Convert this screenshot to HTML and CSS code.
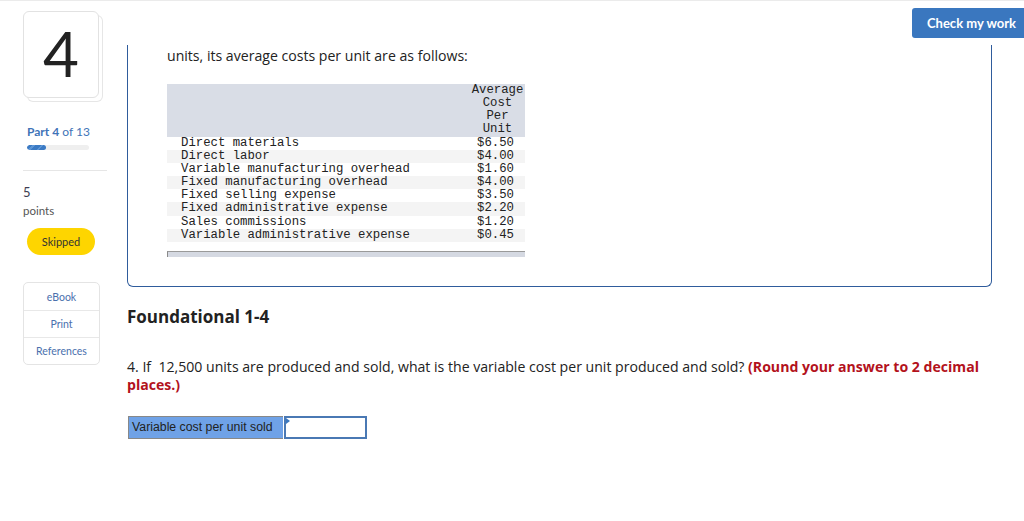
FILE: index.html
```html
<!DOCTYPE html>
<html>
<head>
<meta charset="utf-8">
<link rel="stylesheet" href="styles.css">
</head>
<body>
<div class="topline"></div>
<div class="page">
  <aside class="sidebar">
    <div class="qnum-wrap"><div class="qnum">4</div></div>
    <div class="part"><b>Part 4</b> of 13</div>
    <div class="progress"><div class="progress-fill" style="width: 30%"></div></div>
    <div class="rule"></div>
    <div class="pts-num">5</div>
    <div class="pts-label">points</div>
    <div class="skipped">Skipped</div>
    <div class="links">
      <div class="link">eBook</div>
      <div class="link">Print</div>
      <div class="link">References</div>
    </div>
  </aside>
  <main class="main">
    <header class="header">
      <button class="check">Check my work</button>
    </header>
    <section class="card">
      <p class="intro">units, its average costs per unit are as follows:</p>
      <table class="costs">
        <thead>
          <tr><th class="blank"></th><th class="hdr">Average<br>Cost<br>Per<br>Unit</th></tr>
        </thead>
        <tbody>
          <tr><td class="lbl">Direct materials</td><td class="val">$6.50</td></tr>
          <tr class="alt"><td class="lbl">Direct labor</td><td class="val">$4.00</td></tr>
          <tr><td class="lbl">Variable manufacturing overhead</td><td class="val">$1.60</td></tr>
          <tr class="alt"><td class="lbl">Fixed manufacturing overhead</td><td class="val">$4.00</td></tr>
          <tr><td class="lbl">Fixed selling expense</td><td class="val">$3.50</td></tr>
          <tr class="alt"><td class="lbl">Fixed administrative expense</td><td class="val">$2.20</td></tr>
          <tr><td class="lbl">Sales commissions</td><td class="val">$1.20</td></tr>
          <tr class="alt"><td class="lbl">Variable administrative expense</td><td class="val">$0.45</td></tr>
        </tbody>
      </table>
      <div class="table-foot"></div>
    </section>
    <h2 class="title">Foundational 1-4</h2>
    <div class="question">
      <div class="q-line">4. If&nbsp; 12,500 units are produced and sold, what is the variable cost per unit produced and sold? <strong class="note">(Round your answer to 2 decimal</strong></div>
      <div class="q-line"><strong class="note">places.)</strong></div>
    </div>
    <div class="answer">
      <div class="answer-label">Variable cost per unit sold</div>
      <div class="answer-input"><span class="flag"></span></div>
    </div>
  </main>
</div>
</body>
</html>
```

FILE: styles.css
```css
* { box-sizing: border-box; }
html, body { margin: 0; padding: 0; background: #fff; }
body {
  width: 1024px;
  height: 521px;
  overflow: hidden;
  font-family: "Open Sans", "Liberation Sans", sans-serif;
  color: #222;
}
.topline { height: 1px; background: #ebebeb; }
.page { display: flex; }

.sidebar {
  width: 127px;
  flex: none;
  padding-left: 23px;
  padding-top: 10px;
  font-family: Lato, "Liberation Sans", sans-serif;
}
.qnum-wrap { width: 81px; height: 92px; }
.qnum {
  width: 76px;
  height: 87px;
  border: 1px solid #e2e2e2;
  border-radius: 6px;
  background: #fff;
  box-shadow: 4px 4px 0 -1px #fff, 4px 4px 0 0 #e6e6e6;
  display: flex;
  align-items: center;
  justify-content: center;
  font-size: 62px;
  font-weight: 400;
  color: #222;
  line-height: 1;
  padding-bottom: 4px;
}
.part {
  margin: 22px 0 0 4px;
  font-size: 12px;
  line-height: 14px;
  color: #3f74b8;
}
.part b { font-weight: 700; }
.progress {
  margin: 6px 0 0 4px;
  width: 62px;
  height: 5px;
  border-radius: 3px;
  background: #efefef;
  overflow: hidden;
}
.progress-fill {
  height: 100%;
  border-radius: 3px;
  background: repeating-linear-gradient(135deg, #3b7ac4 0 4px, #5b95d6 4px 6px);
}
.rule { margin-top: 20px; width: 84px; height: 1px; background: #e6e6e6; }
.pts-num { margin-top: 14px; font-size: 13px; line-height: 15px; color: #3d3d52; }
.pts-label { margin-top: 4px; font-size: 11.5px; line-height: 14px; color: #555; }
.skipped {
  margin: 10px 0 0 4px;
  width: 68px;
  height: 27px;
  border-radius: 14px;
  background: #fed500;
  display: flex;
  align-items: center;
  justify-content: center;
  font-size: 11px;
  color: #333;
}
.links {
  margin-top: 27px;
  width: 77px;
  border: 1px solid #e4e4e4;
  border-radius: 5px;
}
.link {
  height: 27px;
  display: flex;
  align-items: center;
  justify-content: center;
  font-size: 10.5px;
  color: #4a70ad;
}
.link + .link { border-top: 1px solid #e8e8e8; }

.main { width: 897px; flex: none; }
.header { height: 44px; display: flex; justify-content: flex-end; align-items: flex-start; padding-top: 7px; }
.check {
  height: 30px;
  width: 114px;
  margin-right: -2px;
  border: none;
  border-radius: 3px;
  background: #3a77bf;
  color: #fff;
  font-family: Lato, "Liberation Sans", sans-serif;
  font-weight: 700;
  font-size: 13px;
  text-align: left;
  padding: 0 0 0 15px;
}

.card {
  width: 865px;
  border: 1px solid #2f5c9c;
  border-top: none;
  border-radius: 0 0 6px 6px;
  padding: 2px 0 29px 39px;
}
.intro { margin: 0; font-size: 14.1px; line-height: 18px; color: #222; }
.costs {
  margin-top: 19px;
  border-collapse: collapse;
  width: 358px;
  font-family: "Liberation Mono", "DejaVu Sans Mono", monospace;
  font-size: 12.3px;
  color: #222;
}
.costs thead tr { background: #d9dde6; }
.costs th { font-weight: 400; padding: 0; line-height: 13px; vertical-align: top; }
.costs .hdr { width: 55px; text-align: center; padding-bottom: 1px; }
.costs td { padding: 0; line-height: 13.1px; height: 13.1px; }
.costs .lbl { padding-left: 14px; }
.costs .val { text-align: right; padding-right: 11px; }
.costs .alt { background: #f4f4f4; }
.table-foot {
  margin-top: 9px;
  width: 358px;
  height: 6px;
  background: #d5d9e2;
  border-top: 1px solid #9a9a9a;
  border-left: 1px solid #8a8a8a;
}

.title {
  margin: 19px 0 0 0;
  font-size: 17px;
  line-height: 22px;
  font-weight: 700;
  color: #222;
}
.question {
  margin: 30px 0 0 0;
  width: 875px;
  font-size: 14.1px;
  line-height: 18px;
  color: #222;
}
.q-line { white-space: nowrap; }
.note { color: #b3121c; font-weight: 700; }
.answer {
  margin: 22px 0 0 1px;
  display: flex;
  width: 239px;
  height: 23px;
}
.answer-label {
  width: 155px;
  background: #6fa2e7;
  border: 1px solid #888;
  border-right: none;
  font-family: "Liberation Sans", Arial, sans-serif;
  font-size: 12.3px;
  color: #222;
  display: flex;
  align-items: center;
  padding-left: 3px;
}
.answer-input {
  flex: 1;
  background: #fff;
  border: 2px solid #4a79b4;
  margin-left: 1px;
  position: relative;
}
.flag {
  position: absolute;
  left: 0;
  top: 0;
  width: 0;
  height: 0;
  border-top: 3px solid transparent;
  border-bottom: 3px solid transparent;
  border-left: 4px solid #3a77bf;
}
```
